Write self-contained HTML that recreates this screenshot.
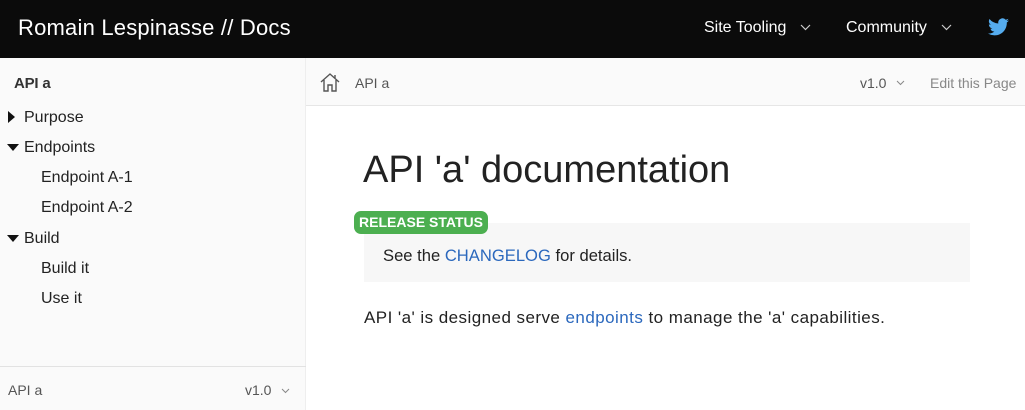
<!DOCTYPE html>
<html><head><meta charset="utf-8"><style>
*{margin:0;padding:0;box-sizing:border-box}
body{width:1025px;height:410px;overflow:hidden;font-family:"Liberation Sans",sans-serif;background:#fff;position:relative;color:#222}
.a{position:absolute;white-space:nowrap}
.hdr{position:absolute;left:0;top:0;width:1025px;height:58px;background:#0b0b0b}
.side{position:absolute;left:0;top:58px;width:306px;height:352px;background:#fafafa;border-right:1px solid #eee}
.bc{position:absolute;left:306px;top:58px;width:719px;height:48px;background:#fafafa;border-bottom:1px solid #e6e6e6}
.tri{position:absolute;width:0;height:0}
a{color:#2b68bd;text-decoration:none}
</style></head><body>
<div class="hdr"></div>
<div class="a" style="left:18px;top:15px;font-size:22px;color:#fff;letter-spacing:0.2px">Romain Lespinasse // Docs</div>
<div class="a" style="left:704px;top:19px;font-size:16px;color:#fff">Site Tooling</div>
<svg class="a" style="left:800px;top:24px" width="11" height="7"><path d="M1 1l4.5 4.5L10 1" fill="none" stroke="#ccc" stroke-width="1.2"/></svg>
<div class="a" style="left:846px;top:19px;font-size:16px;color:#fff">Community</div>
<svg class="a" style="left:941px;top:24px" width="11" height="7"><path d="M1 1l4.5 4.5L10 1" fill="none" stroke="#ccc" stroke-width="1.2"/></svg>
<svg class="a" style="left:988px;top:18px" width="21" height="18" viewBox="0 0 24 20"><path fill="#55acee" d="M24 2.4a9.8 9.8 0 0 1-2.8.8A4.9 4.9 0 0 0 23.3.5a9.9 9.9 0 0 1-3.1 1.2A4.9 4.9 0 0 0 11.8 6 14 14 0 0 1 1.700.9a4.9 4.9 0 0 0 1.5 6.6A4.9 4.9 0 0 1 1 6.9a4.9 4.9 0 0 0 3.9 4.9 4.9 4.9 0 0 1-2.2.1 4.9 4.9 0 0 0 4.6 3.4A9.9 9.9 0 0 1 0 17.3 14 14 0 0 0 7.5 19.5c9.1 0 14-7.5 14-14v-.6A10 10 0 0 0 24 2.4z"/></svg>

<div class="side"></div>
<div class="a" style="left:14px;top:75px;font-size:15px;color:#333;font-weight:bold;letter-spacing:-0.2px">API a</div>
<div class="tri" style="left:8px;top:111px;border-left:7px solid #111;border-top:6px solid transparent;border-bottom:6px solid transparent"></div>
<div class="a" style="left:24px;top:109px;font-size:16px">Purpose</div>
<div class="tri" style="left:7px;top:144px;border-top:7px solid #111;border-left:6px solid transparent;border-right:6px solid transparent"></div>
<div class="a" style="left:24px;top:139px;font-size:16px">Endpoints</div>
<div class="a" style="left:41px;top:169px;font-size:16px">Endpoint A-1</div>
<div class="a" style="left:41px;top:199px;font-size:16px">Endpoint A-2</div>
<div class="tri" style="left:7px;top:235px;border-top:7px solid #111;border-left:6px solid transparent;border-right:6px solid transparent"></div>
<div class="a" style="left:24px;top:230px;font-size:16px">Build</div>
<div class="a" style="left:41px;top:260px;font-size:16px">Build it</div>
<div class="a" style="left:41px;top:290px;font-size:16px">Use it</div>
<div class="a" style="left:0;top:366px;width:306px;height:1px;background:#e2e2e2"></div>
<div class="a" style="left:8px;top:382px;font-size:14px;color:#555">API a</div>
<div class="a" style="left:245px;top:382px;font-size:14px;color:#555">v1.0</div>
<svg class="a" style="left:281px;top:388px" width="9" height="6"><path d="M1 1l3.5 3.5L8 1" fill="none" stroke="#888" stroke-width="1"/></svg>

<div class="bc"></div>
<svg class="a" style="left:319px;top:72px" width="22" height="20" viewBox="0 0 22 20"><path d="M2 10L11 2l9 8M5 8v11h4v-6h4v6h4V8M16 3v3" fill="none" stroke="#555" stroke-width="1.4"/></svg>
<div class="a" style="left:355px;top:75px;font-size:14px;color:#555">API a</div>
<div class="a" style="left:860px;top:75px;font-size:14px;color:#555">v1.0</div>
<svg class="a" style="left:896px;top:80px" width="9" height="6"><path d="M1 1l3.5 3.5L8 1" fill="none" stroke="#888" stroke-width="1"/></svg>
<div class="a" style="left:930px;top:75px;font-size:14px;color:#888">Edit this Page</div>

<div class="a" style="left:363px;top:149px;font-size:38px;color:#222">API 'a' documentation</div>
<div class="a" style="left:364px;top:223px;width:606px;height:59px;background:#f7f7f7"></div>
<div class="a" style="left:354px;top:211px;width:134px;height:23px;background:#4caf50;border-radius:7px;color:#fff;font-weight:bold;font-size:14px;line-height:23px;text-align:center">RELEASE STATUS</div>
<div class="a" style="left:383px;top:246px;font-size:16.6px">See the <a>CHANGELOG</a> for details.</div>
<div class="a" style="left:364px;top:308px;font-size:17px;letter-spacing:0.45px">API 'a' is designed serve <a>endpoints</a> to manage the 'a' capabilities.</div>
</body></html>
